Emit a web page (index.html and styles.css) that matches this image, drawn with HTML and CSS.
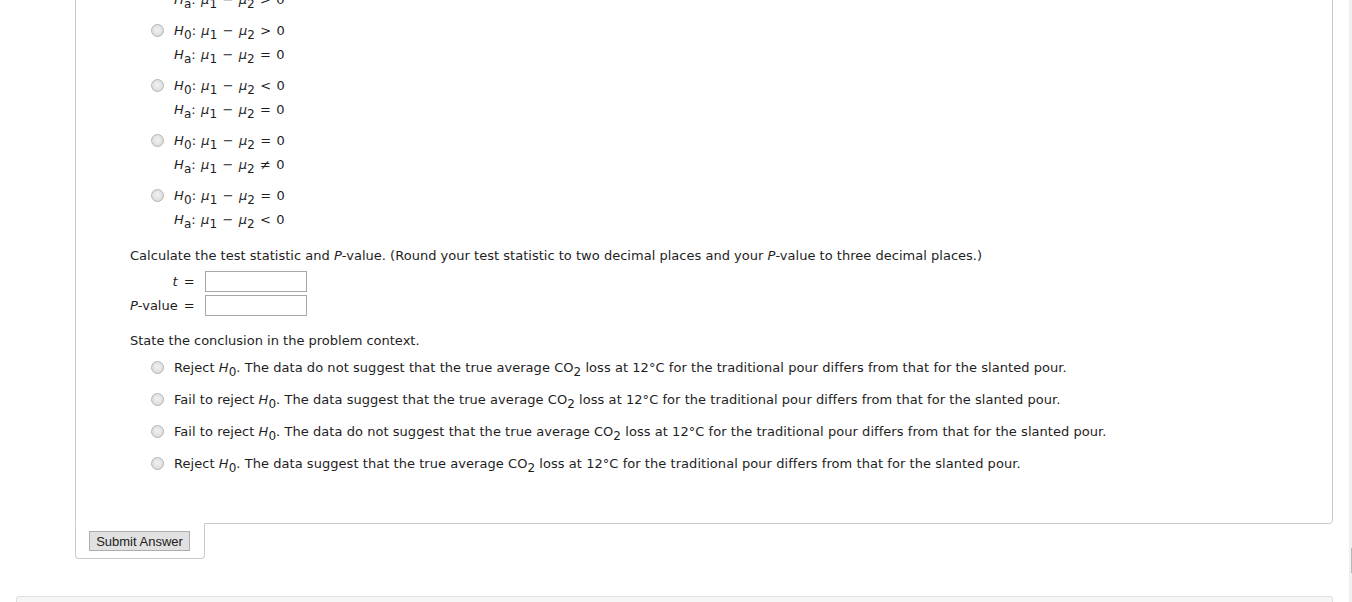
FILE: index.html
```html
<!DOCTYPE html>
<html lang="en">
<head>
<meta charset="utf-8">
<title>Question</title>
<link rel="stylesheet" href="styles.css">
</head>
<body>
<div class="page">
  <div class="card">
    <div class="options">
      <label class="opt">
        <input type="radio" name="hyp" class="radio">
        <span class="hyp">
          <span class="line"><i>H</i><sub>0</sub>: <i>μ</i><sub>1</sub> − <i>μ</i><sub>2</sub> = 0</span>
          <span class="line"><i>H</i><sub>a</sub>: <i>μ</i><sub>1</sub> − <i>μ</i><sub>2</sub> &gt; 0</span>
        </span>
      </label>
      <label class="opt">
        <input type="radio" name="hyp" class="radio">
        <span class="hyp">
          <span class="line"><i>H</i><sub>0</sub>: <i>μ</i><sub>1</sub> − <i>μ</i><sub>2</sub> &gt; 0</span>
          <span class="line"><i>H</i><sub>a</sub>: <i>μ</i><sub>1</sub> − <i>μ</i><sub>2</sub> = 0</span>
        </span>
      </label>
      <label class="opt">
        <input type="radio" name="hyp" class="radio">
        <span class="hyp">
          <span class="line"><i>H</i><sub>0</sub>: <i>μ</i><sub>1</sub> − <i>μ</i><sub>2</sub> &lt; 0</span>
          <span class="line"><i>H</i><sub>a</sub>: <i>μ</i><sub>1</sub> − <i>μ</i><sub>2</sub> = 0</span>
        </span>
      </label>
      <label class="opt">
        <input type="radio" name="hyp" class="radio">
        <span class="hyp">
          <span class="line"><i>H</i><sub>0</sub>: <i>μ</i><sub>1</sub> − <i>μ</i><sub>2</sub> = 0</span>
          <span class="line"><i>H</i><sub>a</sub>: <i>μ</i><sub>1</sub> − <i>μ</i><sub>2</sub> ≠ 0</span>
        </span>
      </label>
      <label class="opt">
        <input type="radio" name="hyp" class="radio">
        <span class="hyp">
          <span class="line"><i>H</i><sub>0</sub>: <i>μ</i><sub>1</sub> − <i>μ</i><sub>2</sub> = 0</span>
          <span class="line"><i>H</i><sub>a</sub>: <i>μ</i><sub>1</sub> − <i>μ</i><sub>2</sub> &lt; 0</span>
        </span>
      </label>
    </div>

    <p class="para calc">Calculate the test statistic and <i>P</i>-value. (Round your test statistic to two decimal places and your <i>P</i>-value to three decimal places.)</p>
    <div class="answers">
      <span class="lbl"><i>t</i></span><span class="eq">=</span><input type="text" class="box">
      <span class="lbl"><i>P</i>-value</span><span class="eq">=</span><input type="text" class="box">
    </div>

    <p class="para state">State the conclusion in the problem context.</p>
    <div class="concl">
      <label class="copt"><input type="radio" name="con" class="radio"><span class="ctext">Reject <i>H</i><sub>0</sub>. The data do not suggest that the true average CO<sub>2</sub> loss at 12°C for the traditional pour differs from that for the slanted pour.</span></label>
      <label class="copt"><input type="radio" name="con" class="radio"><span class="ctext">Fail to reject <i>H</i><sub>0</sub>. The data suggest that the true average CO<sub>2</sub> loss at 12°C for the traditional pour differs from that for the slanted pour.</span></label>
      <label class="copt"><input type="radio" name="con" class="radio"><span class="ctext">Fail to reject <i>H</i><sub>0</sub>. The data do not suggest that the true average CO<sub>2</sub> loss at 12°C for the traditional pour differs from that for the slanted pour.</span></label>
      <label class="copt"><input type="radio" name="con" class="radio"><span class="ctext">Reject <i>H</i><sub>0</sub>. The data suggest that the true average CO<sub>2</sub> loss at 12°C for the traditional pour differs from that for the slanted pour.</span></label>
    </div>
  </div>
  <div class="tab">
    <button type="button" class="submit">Submit Answer</button>
  </div>
  <div class="next"></div>
</div>
<div class="scrollbar"><div class="thumb"></div></div>
</body>
</html>
```

FILE: styles.css
```css
html {
  overflow: hidden;
}
body {
  margin: 0;
  background: #fff;
  font-family: "DejaVu Sans", Verdana, sans-serif;
  font-size: 13px;
  color: #1e1e1e;
}
.page {
  display: flex;
  flex-direction: column;
}
.card {
  margin: -57px 19px 0 75px;
  border: 1px solid #c9c9c9;
  border-radius: 4px 4px 4px 0;
  padding: 20px 20px 47px 54px;
}
.options {
  display: flex;
  flex-direction: column;
  gap: 7px;
  padding-left: 21px;
}
.opt {
  display: flex;
  align-items: flex-start;
}
.radio {
  appearance: none;
  -webkit-appearance: none;
  width: 13px;
  height: 13px;
  margin: 5px 10px 0 0;
  border: 1px solid #b4b4b4;
  border-radius: 50%;
  background: radial-gradient(circle at 50% 45%, #f2f2f2 0%, #e0e0e0 60%, #d4d4d4 100%);
  flex: none;
  box-sizing: border-box;
}
.hyp {
  display: flex;
  flex-direction: column;
}
.line {
  display: block;
  line-height: 24px;
  height: 24px;
  white-space: pre;
  word-spacing: 1px;
  letter-spacing: 0.1px;
}
sub {
  font-size: 12px;
  vertical-align: -4px;
  line-height: 0;
}
i {
  font-style: italic;
}
.para {
  margin: 0;
  line-height: 24px;
}
.calc {
  margin-top: 12px;
  letter-spacing: 0.02px;
}
.answers {
  display: grid;
  grid-template-columns: auto auto auto;
  justify-content: start;
  align-items: center;
  grid-auto-rows: 24px;
  margin-top: 1px;
}
.lbl {
  text-align: right;
}
.eq {
  margin: 0 10px 0 6px;
}
.box {
  width: 102px;
  height: 21px;
  box-sizing: border-box;
  border: 1px solid #a9a9a9;
  margin: 0;
  padding: 0 3px;
  font: inherit;
}
.state {
  margin-top: 12px;
}
.concl {
  display: flex;
  flex-direction: column;
  gap: 8px;
  padding-left: 21px;
  margin-top: 3px;
}
.copt {
  display: flex;
  align-items: flex-start;
}
.ctext {
  line-height: 24px;
  letter-spacing: 0.05px;
}
.tab {
  align-self: flex-start;
  margin: -1px 0 0 75px;
  width: 130px;
  box-sizing: border-box;
  border: 1px solid #c9c9c9;
  border-top-color: #fff;
  border-radius: 0 0 4px 4px;
  background: #fff;
  padding: 7px 0 7px 13px;
}
.submit {
  display: block;
  height: 20px;
  width: 101px;
  box-sizing: border-box;
  padding: 0;
  margin: 0;
  border: 1px solid #adadad;
  background: #e1e1e1;
  font-family: "Liberation Sans", Arial, sans-serif;
  font-size: 13px;
  color: #222;
  border-radius: 0;
}
.next {
  margin: 37px 19px 0 16px;
  height: 60px;
  border: 1px solid #dedede;
  border-radius: 3px 3px 0 0;
  background: #f6f6f6;
}
.scrollbar {
  position: fixed;
  top: 0;
  right: 0;
  width: 3px;
  height: 100%;
  background: #f0f0f0;
}
.thumb {
  position: absolute;
  right: 0;
  top: 548px;
  width: 1px;
  height: 25px;
  background: #b9b9b9;
}
```
